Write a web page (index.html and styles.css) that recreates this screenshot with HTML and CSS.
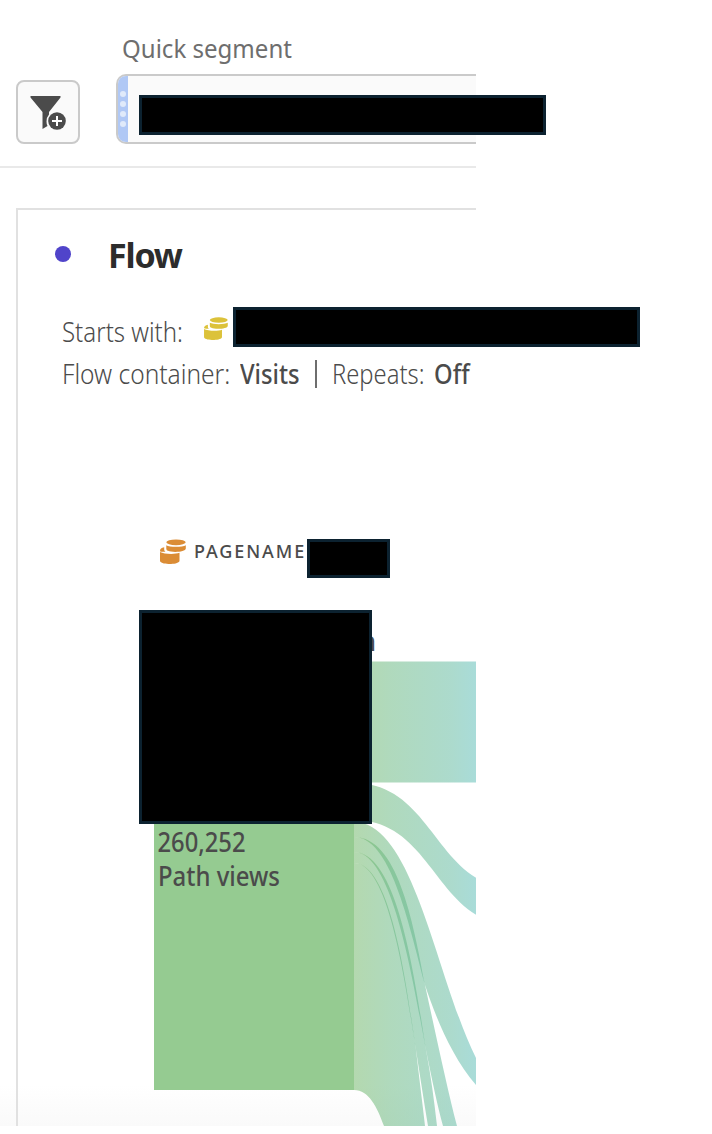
FILE: index.html
```html
<!DOCTYPE html>
<html lang="en">
<head>
    <meta charset="UTF-8">
    <meta name="viewport" content="width=device-width, initial-scale=1.0">
    <title>Flow</title>
    <link rel="stylesheet" href="styles.css">
</head>
<body>
    <svg class="sprite" aria-hidden="true">
        <symbol id="coins" viewBox="0 0 26 25">
            <path d="M0 13c4 2.200 15 2.500 19.500 .8v8c0 4.300-19.500 4.300-19.500 0z"/>
            <path d="M0 12c0-2 1.400-3.200 4.200-3.700v2.200c0 1 .5 1.700 1.300 2.300C2.600 12.900 0 12.800 0 12z"/>
            <ellipse cx="16" cy="3.300" rx="9.700" ry="2.900"/>
            <path d="M6.300 6.300c3.200 2 16.200 2 19.500 0v3.200c0 3.600-13.500 4.300-17.800 2.300-1.200-.6-1.700-1.200-1.700-2.100z"/>
        </symbol>
    </svg>

    <div class="app">
        <header class="toolbar">
            <button class="filter-button">
                <svg width="38" height="38" viewBox="0 0 38 38">
                    <path d="M1.500 3h30v1.500L20 19v2.500a10 10 0 0 0-2.500 7 10 10 0 0 0 1 4.500L13.500 36V19L1.500 4.500z"/>
                    <circle cx="28" cy="28" r="8.800"/>
                    <path class="plus" d="M28 23v10M23 28h10"/>
                </svg>
            </button>
            <div class="segment">
                <div class="segment-label"><span class="narrow">Quick segment</span></div>
                <div class="drop-zone">
                    <div class="handle"><i></i><i></i><i></i><i></i></div>
                    <div class="redacted redacted-segment"></div>
                </div>
            </div>
        </header>

        <main class="panel">
            <h1 class="title"><span class="dot"></span><span class="title-text">Flow</span></h1>

            <div class="info">
                <div class="info-row">
                    <span class="starts narrow">Starts with:</span>
                    <svg class="coins yellow"><use href="#coins"/></svg>
                    <div class="redacted redacted-start"></div>
                </div>
                <div class="info-row">
                    <span class="container-label narrow">Flow container:</span>
                    <b class="visits narrow">Visits</b>
                    <span class="divider"></span>
                    <span class="repeats narrow">Repeats:</span>
                    <b class="off narrow">Off</b>
                </div>
            </div>

            <div class="column-head">
                <svg class="coins orange"><use href="#coins"/></svg>
                <span class="pagename">PAGENAME</span>
                <div class="redacted redacted-page"></div>
            </div>

            <div class="flow">
                <svg width="458" height="516" viewBox="18 610 458 516">
                    <defs>
                        <linearGradient id="band" gradientUnits="userSpaceOnUse" x1="354" y1="0" x2="476" y2="0">
                            <stop offset="0" stop-color="#69b260"/>
                            <stop offset="0.300" stop-color="#61b47b"/>
                            <stop offset="0.800" stop-color="#5ab69b"/>
                            <stop offset="1" stop-color="#53b9b3"/>
                        </linearGradient>
                    </defs>
                    <text class="node-name" x="376" y="651" text-anchor="end">n</text>
                    <rect class="node" x="154" y="661" width="200" height="429"/>
                    <g class="bands">
                        <path d="M354 661.500H476V782.500H354z"/>
                        <path d="M354 783C434 783 436 888 514 888V925C436 925 434 820 354 820z"/>
                        <path d="M354 822C414 822 436 978 476 1058V1085C450 1055 434 1012 425 985C408 920 390 837 354 837z"/>
                        <path d="M354 837C397 837 413 920 425 985C437 1040 448 1092 457 1126H443C438 1108 432 1080 426 1050C412 975 392 852 354 852z"/>
                        <path d="M354 852C398 852 415 980 426 1050C431 1076 434 1100 437 1126H428C424 1102 420 1076 416 1050C406 990 390 863 354 863z"/>
                        <path d="M354 863C392 863 407 990 416 1050C419 1076 422 1100 425 1126H384C377 1107 369 1090 354 1090z"/>
                    </g>
                    <text class="node-text" x="157.500" y="851.500" textLength="88" lengthAdjust="spacingAndGlyphs">260,252</text>
                    <text class="node-text" x="158" y="886" textLength="122" lengthAdjust="spacingAndGlyphs">Path views</text>
                </svg>
                <div class="redacted redacted-node"></div>
            </div>
        </main>
    </div>
</body>
</html>
```
FILE: styles.css
```css
* {
    box-sizing: border-box;
}

body {
    margin: 0;
    background-color: #fff;
    font-family: "Noto Sans", "Open Sans", sans-serif;
    color: #4b4b4b;
}

.sprite {
    display: none;
}

.app {
    width: 476px;
    height: 1126px;
    display: flex;
    flex-direction: column;
    background: linear-gradient(#fff 1085px, #fafafa 1126px);
}

.narrow {
    display: inline-block;
    transform-origin: left center;
    transform: scaleX(0.900);
}

/* Toolbar */
.toolbar {
    height: 168px;
    padding: 32px 0 22px 16px;
    display: flex;
    align-items: flex-end;
    gap: 36px;
    border-bottom: 2px solid #e9e9e9;
}

.filter-button {
    width: 64px;
    height: 64px;
    padding: 0;
    display: flex;
    align-items: center;
    justify-content: center;
    background-color: #fafafa;
    border: 2px solid #cacaca;
    border-radius: 8px;
}

.filter-button svg {
    fill: #4b4b4b;
}

.filter-button .plus {
    stroke: #fff;
    stroke-width: 2;
}

.segment {
    flex: 1;
}

.segment-label {
    height: 42px;
    padding-left: 6px;
    line-height: 32px;
    font-size: 26px;
    color: #6e6e6e;
}

.segment-label .narrow {
    transform: scaleX(0.925);
}

.drop-zone {
    position: relative;
    height: 70px;
    background-color: #fafafa;
    border: 2px solid #cacaca;
    border-right: 0;
    border-radius: 10px 0 0 10px;
}

.handle {
    width: 10px;
    height: 66px;
    padding-bottom: 1px;
    display: flex;
    flex-direction: column;
    align-items: center;
    justify-content: center;
    gap: 4px;
    background-color: #b0c8f5;
    border-radius: 8px 0 0 8px;
}

.handle i {
    width: 6px;
    height: 6px;
    border-radius: 50%;
    background-color: #e0eafa;
}

/* Black boxes that hide private values */
.redacted {
    position: absolute;
    background-color: #000;
    border: 3px solid #0c2230;
}

.redacted-segment {
    left: 21px;
    top: 19px;
    width: 407px;
    height: 40px;
}

.redacted-start {
    left: 171px;
    top: -4px;
    width: 407px;
    height: 40px;
}

.redacted-page {
    left: 289px;
    top: 0;
    width: 83px;
    height: 39px;
}

.redacted-node {
    left: 121px;
    top: 0;
    width: 233px;
    height: 214px;
}

/* Flow panel */
.panel {
    flex: 1;
    margin: 40px 0 0 16px;
    border-top: 2px solid #e1e1e1;
    border-left: 2px solid #e1e1e1;
}

.title {
    height: 88px;
    margin: 0;
    padding-left: 37px;
    display: flex;
    align-items: center;
    gap: 37px;
    font-size: 34px;
    font-weight: 700;
    color: #2c2c2c;
}

.dot {
    width: 16px;
    height: 16px;
    border-radius: 50%;
    background-color: #5044ca;
}

.title-text {
    padding-top: 2px;
    letter-spacing: -1.200px;
}

.info {
    height: 241px;
    padding: 13px 0 0 44px;
    font-size: 27px;
    font-weight: 300;
}

.info-row {
    position: relative;
    height: 42px;
    line-height: 42px;
    display: flex;
    white-space: nowrap;
}

.info-row b {
    font-weight: 500;
    transform: scaleX(0.880);
}

.starts {
    width: 142px;
    transform: scaleX(0.890);
}

.container-label {
    width: 178px;
    transform: scaleX(0.908);
}

.visits {
    width: 75px;
}

.divider {
    width: 2px;
    height: 28px;
    margin: 7px 15px 0 0;
    background-color: #6e6e6e;
}

.repeats {
    width: 102px;
    transform: scaleX(0.880);
}

.coins {
    flex: none;
}

.yellow {
    width: 24px;
    height: 23px;
    margin-top: 6px;
    fill: #dcc23a;
}

.orange {
    width: 26px;
    height: 25px;
    fill: #db8c35;
}

.column-head {
    position: relative;
    height: 71px;
    padding-left: 142px;
    display: flex;
    gap: 8px;
}

.pagename {
    line-height: 25px;
    font-size: 18px;
    font-weight: 500;
    letter-spacing: 1.900px;
}

.flow {
    position: relative;
    height: 516px;
}

.flow svg {
    display: block;
}

.node {
    fill: #95cb91;
}

.bands path {
    fill: url(#band);
    fill-opacity: 0.500;
}

.node-text {
    font-size: 27px;
    font-weight: 500;
    fill: #4b4b4b;
}

.node-name {
    font-size: 26px;
    font-weight: 700;
    fill: #4b4b4b;
}
```
